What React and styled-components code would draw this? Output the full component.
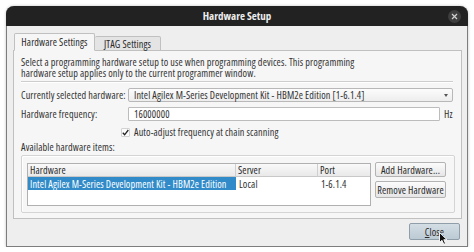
import React from 'react';
import styled, { createGlobalStyle } from 'styled-components';

const Global = createGlobalStyle`
  * { box-sizing: border-box; }
  body {
    margin: 0;
    background: #ffffff;
    font-family: "Open Sans", "Noto Sans", sans-serif;
    font-stretch: 80%;
    font-size: 10.2px;
    letter-spacing: 0.12px;
    color: #323232;
  }
`;

const Window = styled.div`
  margin: 6px 0 0 6px;
  width: 462px;
  height: 241px;
  display: flex;
  flex-direction: column;
  background: #eeeeee;
  border: 1px solid #7d7d7d;
  border-top: none;
  border-radius: 8px 8px 0 0;
  box-shadow: 0 0 3px rgba(0, 0, 0, 0.25);
`;

const TitleBar = styled.div`
  height: 20px;
  margin: 0 -1px;
  display: grid;
  grid-template-columns: 1fr auto 1fr;
  align-items: center;
  background: #222222;
  border-radius: 8px 8px 0 0;
  color: #ececec;
  font-weight: 700;
  font-size: 11px;
  letter-spacing: 0;
`;

const Title = styled.div`
  grid-column: 2;
  line-height: 20px;
`;

const CloseDot = styled.div`
  grid-column: 3;
  justify-self: end;
  margin-right: 7px;
  width: 13px;
  height: 13px;
  border-radius: 50%;
  background: #3e3e3e;
  display: flex;
  align-items: center;
  justify-content: center;
`;

const Body = styled.div`
  flex: 1;
  display: flex;
  flex-direction: column;
  padding: 7px 5px 6px 6px;
`;

const TabBar = styled.div`
  display: flex;
  align-items: flex-end;
  height: 18px;
  padding-left: 1px;
  margin-bottom: -1px;
  position: relative;
  z-index: 1;
`;

const Tab = styled.div`
  width: ${(p) => p.$w}px;
  height: ${(p) => (p.$active ? 18 : 15)}px;
  display: flex;
  align-items: center;
  justify-content: center;
  background: ${(p) => (p.$active ? '#f6f6f6' : '#e4e4e4')};
  border: 1px solid #c0c0c0;
  border-bottom: ${(p) => (p.$active ? '1px solid #f6f6f6' : '1px solid #c0c0c0')};
  border-left: ${(p) => (p.$active ? '1px solid #c0c0c0' : 'none')};
  border-radius: 2px 2px 0 0;
  color: #2a2a2a;
  white-space: nowrap;
`;

const Panel = styled.div`
  height: 169px;
  display: flex;
  flex-direction: column;
  background: #f6f6f6;
  border: 1px solid #c0c0c0;
  padding: 6px 6px 0 7px;
`;

const Desc = styled.div`
  line-height: 11px;
  white-space: nowrap;
`;

const Separator = styled.div`
  margin: 2px 2px 0 0;
  height: 2px;
  border-top: 1px solid #cdcdcd;
  border-bottom: 1px solid #ffffff;
`;

const FieldRow = styled.div`
  display: flex;
  align-items: center;
  height: 14px;
  margin: 5px 2px 0 0;
`;

const Label = styled.div`
  width: 107px;
  flex: none;
  white-space: nowrap;
`;

const Combo = styled.div`
  flex: 1;
  height: 14px;
  display: flex;
  align-items: center;
  justify-content: space-between;
  padding: 0 4px 0 5px;
  background: linear-gradient(#fcfcfc, #ededed);
  border: 1px solid #b8b8b8;
  border-radius: 2px;
  white-space: nowrap;
`;

const Arrow = styled.div`
  width: 0;
  height: 0;
  border-left: 2px solid transparent;
  border-right: 2px solid transparent;
  border-top: 3px solid #555555;
`;

const TextField = styled.div`
  flex: 1;
  height: 14px;
  display: flex;
  align-items: center;
  padding: 0 5px;
  background: #ffffff;
  border: 1px solid #bcbcbc;
  border-radius: 1px;
`;

const Unit = styled.div`
  margin-left: 4px;
  width: 9px;
`;

const CheckRow = styled.div`
  display: flex;
  align-items: center;
  gap: 4px;
  height: 12px;
  margin: 5px 0 0 100px;
`;

const CheckBox = styled.div`
  width: 9px;
  height: 9px;
  display: flex;
  align-items: center;
  justify-content: center;
  background: #fbfbfb;
  border: 1px solid #d2d2d2;
  border-radius: 1px;
`;

const GroupTitle = styled.div`
  margin-top: 4px;
  height: 11px;
  line-height: 11px;
`;

const Group = styled.div`
  margin-top: 2px;
  height: 58px;
  display: flex;
  gap: 4px;
  padding: 7px 8px 6px 5px;
  border: 1px solid #d4d4d4;
  border-radius: 2px;
  box-shadow: inset 1px 1px 0 #ffffff;
`;

const Table = styled.div`
  width: 344px;
  flex: none;
  display: grid;
  grid-template-columns: 208px 82px 1fr;
  grid-template-rows: 13px 13px;
  align-content: start;
  background: #ffffff;
  border: 1px solid #b0b0b0;
`;

const HeadCell = styled.div`
  display: flex;
  align-items: center;
  padding-left: 2px;
  background: linear-gradient(#f9f9f9, #e9e9e9);
  border-bottom: 1px solid #c8c8c8;
  border-right: ${(p) => (p.$last ? 'none' : '1px solid #cfcfcf')};
  color: #2a2a2a;
`;

const Cell = styled.div`
  display: flex;
  align-items: center;
  padding-left: ${(p) => (p.$selected ? 2 : 3)}px;
  background: ${(p) => (p.$selected ? '#318bc8' : 'transparent')};
  color: ${(p) => (p.$selected ? '#ffffff' : '#303030')};
  white-space: nowrap;
`;

const ButtonColumn = styled.div`
  flex: 1;
  display: flex;
  flex-direction: column;
  gap: 4px;
  margin-top: -1px;
`;

const Button = styled.div`
  height: ${(p) => p.$h || 16}px;
  display: flex;
  align-items: center;
  justify-content: center;
  background: ${(p) => (p.$hover ? 'linear-gradient(#d3dde4, #bccad4)' : 'linear-gradient(#fbfbfb, #e6e6e6)')};
  border: 1px solid ${(p) => (p.$hover ? '#8f9ea9' : '#b3b3b3')};
  border-radius: 2px;
  color: #2a2a2a;
  white-space: nowrap;
`;

const Footer = styled.div`
  flex: 1;
  display: flex;
  justify-content: flex-end;
  align-items: flex-end;
  padding-right: 2px;
`;

const CloseWrap = styled.div`
  position: relative;
  width: 51px;
`;

const Cursor = styled.svg`
  position: absolute;
  left: 30px;
  top: 9px;
`;

const Mnemonic = styled.span`
  text-decoration: underline;
`;

export default function App() {
  return (
    <>
      <Global />
      <Window>
        <TitleBar>
          <Title>Hardware Setup</Title>
          <CloseDot>
            <svg width="7" height="7" viewBox="0 0 7 7">
              <path d="M1 1L6 6M6 1L1 6" stroke="#d0d0d0" strokeWidth="1.2" />
            </svg>
          </CloseDot>
        </TitleBar>
        <Body>
          <TabBar>
            <Tab $active $w={81}>Hardware Settings</Tab>
            <Tab $w={66}>JTAG Settings</Tab>
          </TabBar>
          <Panel>
            <Desc>
              Select a programming hardware setup to use when programming devices. This programming
              <br />
              hardware setup applies only to the current programmer window.
            </Desc>
            <Separator />
            <FieldRow>
              <Label>Currently selected hardware:</Label>
              <Combo>
                <span>Intel Agilex M-Series Development Kit - HBM2e Edition [1-6.1.4]</span>
                <Arrow />
              </Combo>
            </FieldRow>
            <FieldRow>
              <Label>Hardware frequency:</Label>
              <TextField>16000000</TextField>
              <Unit>Hz</Unit>
            </FieldRow>
            <CheckRow>
              <CheckBox>
                <svg width="7" height="7" viewBox="0 0 7 7">
                  <path d="M0.8 3.8L2.6 5.8L6.3 1" fill="none" stroke="#222" strokeWidth="1.3" />
                </svg>
              </CheckBox>
              <span>Auto-adjust frequency at chain scanning</span>
            </CheckRow>
            <GroupTitle>Available hardware items:</GroupTitle>
            <Group>
              <Table>
                <HeadCell>Hardware</HeadCell>
                <HeadCell>Server</HeadCell>
                <HeadCell $last>Port</HeadCell>
                <Cell $selected>Intel Agilex M-Series Development Kit - HBM2e Edition</Cell>
                <Cell>Local</Cell>
                <Cell>1-6.1.4</Cell>
              </Table>
              <ButtonColumn>
                <Button $h={15}>Add Hardware...</Button>
                <Button $h={17}>Remove Hardware</Button>
              </ButtonColumn>
            </Group>
          </Panel>
          <Footer>
            <CloseWrap>
              <Button $hover $h={17}>
                <span>
                  <Mnemonic>C</Mnemonic>lose
                </span>
              </Button>
              <Cursor width="9" height="13" viewBox="0 0 9 13">
                <path d="M0.5 0.5L0.5 10.5L3 8.3L4.8 12.3L6.5 11.5L4.8 7.7L8 7.7Z" fill="#111" stroke="#fff" strokeWidth="0.9" />
              </Cursor>
            </CloseWrap>
          </Footer>
        </Body>
      </Window>
    </>
  );
}
